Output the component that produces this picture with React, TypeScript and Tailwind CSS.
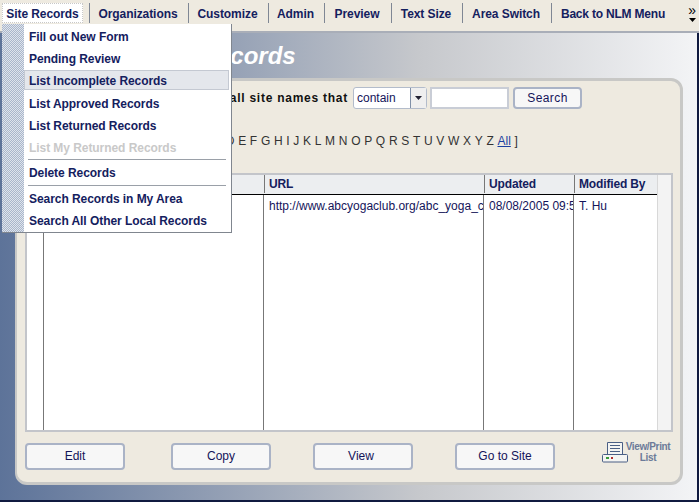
const font = "[font-family:'Liberation_Sans',Arial,sans-serif]";

const navItems = [
  { label: "Organizations", w: "w-[99px]" },
  { label: "Customize", w: "w-[80px]" },
  { label: "Admin", w: "w-[56px]" },
  { label: "Preview", w: "w-[67px]" },
  { label: "Text Size", w: "w-[71px]" },
  { label: "Area Switch", w: "w-[89px]" },
  { label: "Back to NLM Menu", w: "w-[125px] tracking-[-0.2px]" },
];

const menu: { label: string; h: string; kind?: "active" | "disabled"; sep?: string }[] = [
  { label: "Fill out New Form", h: "h-[22px]" },
  { label: "Pending Review", h: "h-[22px]" },
  { label: "List Incomplete Records", h: "h-[23px]", kind: "active" },
  { label: "List Approved Records", h: "h-[22px]" },
  { label: "List Returned Records", h: "h-[22px]" },
  { label: "List My Returned Records", h: "h-[25px]", kind: "disabled", sep: "bottom-[2px]" },
  { label: "Delete Records", h: "h-[26px]", sep: "bottom-[2px]" },
  { label: "Search Records in My Area", h: "h-[22px]" },
  { label: "Search All Other Local Records", h: "h-[22px]" },
];

const letters = "A B C D E F G H I J K L M N O P Q R S T U V W X Y Z".split(" ");

function Btn({ label, className = "" }: { label: string; className?: string }) {
  return (
    <button
      className={`h-[27px] w-[100px] rounded-[4px] border-2 border-[#aab3c6] bg-[#f7f7f7] text-[12px] text-[#14145a] ${className}`}
    >
      {label}
    </button>
  );
}

export default function App() {
  return (
    <div className={`${font} relative flex h-[502px] w-[699px] flex-col overflow-hidden bg-[#eeeae0]`}>
      {/* top nav */}
      <div className="flex h-[33px] shrink-0 items-start border-b-2 border-[#a9aeb8] bg-[#eeeae0] pt-[3px] pl-[2px] text-[12px] font-bold tracking-[-0.08px] text-[#14205e]">
        <div className="flex h-[20px] w-[81px] items-center justify-center border border-dotted border-[#c8c8c8] bg-white pt-[1px]">
          Site Records
        </div>
        <div className="w-[6px]" />
        {navItems.map((n) => (
          <div
            key={n.label}
            className={`flex h-[20px] ${n.w} items-center justify-center border-l border-[#7f8794] pt-[1px] pr-[2px]`}
          >
            {n.label}
          </div>
        ))}
        <div className="ml-[10px] flex w-[12px] flex-col items-center pt-[3px] font-normal text-black">
          <span className="text-[14px] leading-[9px]">»</span>
          <svg width="7" height="4" viewBox="0 0 7 4" className="mt-[3px] shrink-0">
            <path d="M0 0h7L3.5 4z" fill="#000" />
          </svg>
        </div>
      </div>

      {/* gradient body */}
      <div className="flex min-h-0 flex-1 flex-col border-r-2 border-b-2 border-[#101a40] bg-gradient-to-r from-[#5d7399] via-[#c6c8cc] via-60% to-[#f3f4f6]">
        {/* title band */}
        <div className="flex h-[45px] shrink-0 items-center pl-[149px]">
          <span className="text-[24px] font-bold text-white italic">Site Records</span>
        </div>

        {/* beige panel */}
        <div className="mr-[14px] mb-[15px] ml-[15px] flex min-h-0 flex-1 flex-col rounded-[12px] border-t-[3px] border-r-[3px] border-b-[3px] border-l-[2px] border-[#c8c8c6] bg-[#eeeae0]">
          {/* search row */}
          <div className="flex h-[28px] shrink-0 items-end pl-[7px]">
            <div className="flex items-center text-[12px] font-bold tracking-[0.75px] text-[#111]">
              <span className="mr-[5px] w-[324px] text-right">Search all site names that</span>
              <div className="flex h-[22px] w-[74px] items-center rounded-[3px] border border-[#b3bccb] bg-white text-[12px] font-normal tracking-normal text-[#14145a]">
                <span className="flex-1 pl-[3px]">contain</span>
                <span className="flex h-full w-[16px] items-center justify-center border-l border-[#8090a8] bg-[#efefef]">
                  <svg width="7" height="4" viewBox="0 0 7 4">
                    <path d="M0 0h7L3.5 4z" fill="#223" />
                  </svg>
                </span>
              </div>
              <div className="ml-[3px] h-[22px] w-[79px] border-2 border-[#c9cdd6] bg-white" />
              <button className="ml-[4px] h-[22px] w-[69px] rounded-[4px] border-2 border-[#aab3c6] bg-[#f7f7f7] text-[12px] font-normal tracking-[0.4px] text-[#14145a]">
                Search
              </button>
            </div>
          </div>

          {/* letters */}
          <div className="flex h-[42px] shrink-0 items-end justify-start pl-[166px] text-[12px] text-[#333]">
            <div className="flex gap-[3.7px] pb-[3px] leading-[14px]">
              <span>[</span>
              {letters.map((l) => (
                <span key={l}>{l}</span>
              ))}
              <span className="text-[#1c3fa0] underline">All</span>
              <span>]</span>
            </div>
          </div>

          {/* table */}
          <div className="mt-[22px] mr-[7px] ml-[8px] flex min-h-0 flex-1 border-2 border-[#c3c5ca] bg-white">
            <div className="flex min-w-0 flex-1 flex-col">
              <div className="flex h-[20px] shrink-0 border-b border-black bg-[#eceef0] pb-[1px] text-[12px] font-bold tracking-[-0.15px] text-[#14205e]">
                <div className="w-[238px] border-r border-[#777]" />
                <div className="flex w-[220px] items-center border-r border-[#777] pl-[4px]">URL</div>
                <div className="flex w-[90px] items-center border-r border-[#777] pl-[4px]">Updated</div>
                <div className="flex flex-1 items-center pl-[4px]">Modified By</div>
              </div>
              <div className="flex min-h-0 flex-1 text-[12px] text-[#14145a]">
                <div className="w-[17px] border-r border-[#777]" />
                <div className="w-[220px] border-r border-[#777]" />
                <div className="w-[220px] overflow-hidden border-r border-[#777] pt-[2px] pl-[5px] whitespace-nowrap">
                  http://www.abcyogaclub.org/abc_yoga_club
                </div>
                <div className="w-[90px] overflow-hidden border-r border-[#777] pt-[2px] pl-[5px] whitespace-nowrap">
                  08/08/2005 09:55
                </div>
                <div className="flex-1 pt-[2px] pl-[5px]">T. Hu</div>
              </div>
            </div>
            <div className="w-[14px] shrink-0 border-l border-[#d8d8d8] bg-[#f3f3f3]" />
          </div>

          {/* buttons */}
          <div className="flex h-[50px] shrink-0 items-center pb-[2px] pl-[8px]">
            <Btn label="Edit" />
            <Btn label="Copy" className="ml-[46px]" />
            <Btn label="View" className="ml-[42px] pr-[4px]" />
            <Btn label="Go to Site" className="ml-[42px]" />
            <div className="mb-[8px] ml-[47px] flex items-center">
              <svg width="26" height="21" viewBox="0 0 26 21" fill="none">
                <path d="M5.500 0.500h15v12h-15z" fill="#f4f4f2" stroke="#4a5f85" />
                <path d="M8 3.500h10M8 6.500h10M8 9.500h10" stroke="#4a5f85" />
                <rect x="0.500" y="12.500" width="25" height="7.500" rx="1" fill="#f4f4f2" stroke="#4a5f85" />
                <path d="M4 16h3" stroke="#3a9a3a" strokeWidth="2" />
                <path d="M9 16h2" stroke="#b03030" strokeWidth="2" />
              </svg>
              <div className="ml-[-3px] w-[46px] text-center text-[10px] leading-[11px] font-bold tracking-[-0.35px] text-[#6c7a99]">
                View/Print
                <br />
                List
              </div>
            </div>
          </div>
        </div>
      </div>

      {/* dropdown overlay */}
      <div className="absolute top-[24px] left-[2px] flex w-[230px] border-r border-b border-[#80868f] bg-white pt-[2px] text-[12px] font-bold tracking-[-0.06px] text-[#14205e]">
        <div className="-mt-[2px] w-[22px] shrink-0 bg-[repeating-conic-gradient(#a9b6cb_0_25%,#dfe4ec_0_50%)] bg-[length:2px_2px]" />
        <div className="min-w-0 flex-1">
          {menu.map((m) => (
            <div key={m.label} className={`${m.h} relative flex items-start`}>
              {m.kind === "active" ? (
                <div className="mr-[2px] flex h-[20px] w-full items-center border border-[#c4c9d2] bg-[#e4e7ec] pt-[1px] pl-[4px]">
                  {m.label}
                </div>
              ) : (
                <div className={`flex h-[22px] w-full items-center pl-[5px] ${m.kind === "disabled" ? "text-[#c9c9c9]" : ""}`}>
                  {m.label}
                </div>
              )}
              {m.sep && <div className={`absolute right-[5px] left-[4px] h-px bg-[#9aa0a8] ${m.sep}`} />}
            </div>
          ))}
        </div>
      </div>
    </div>
  );
}
